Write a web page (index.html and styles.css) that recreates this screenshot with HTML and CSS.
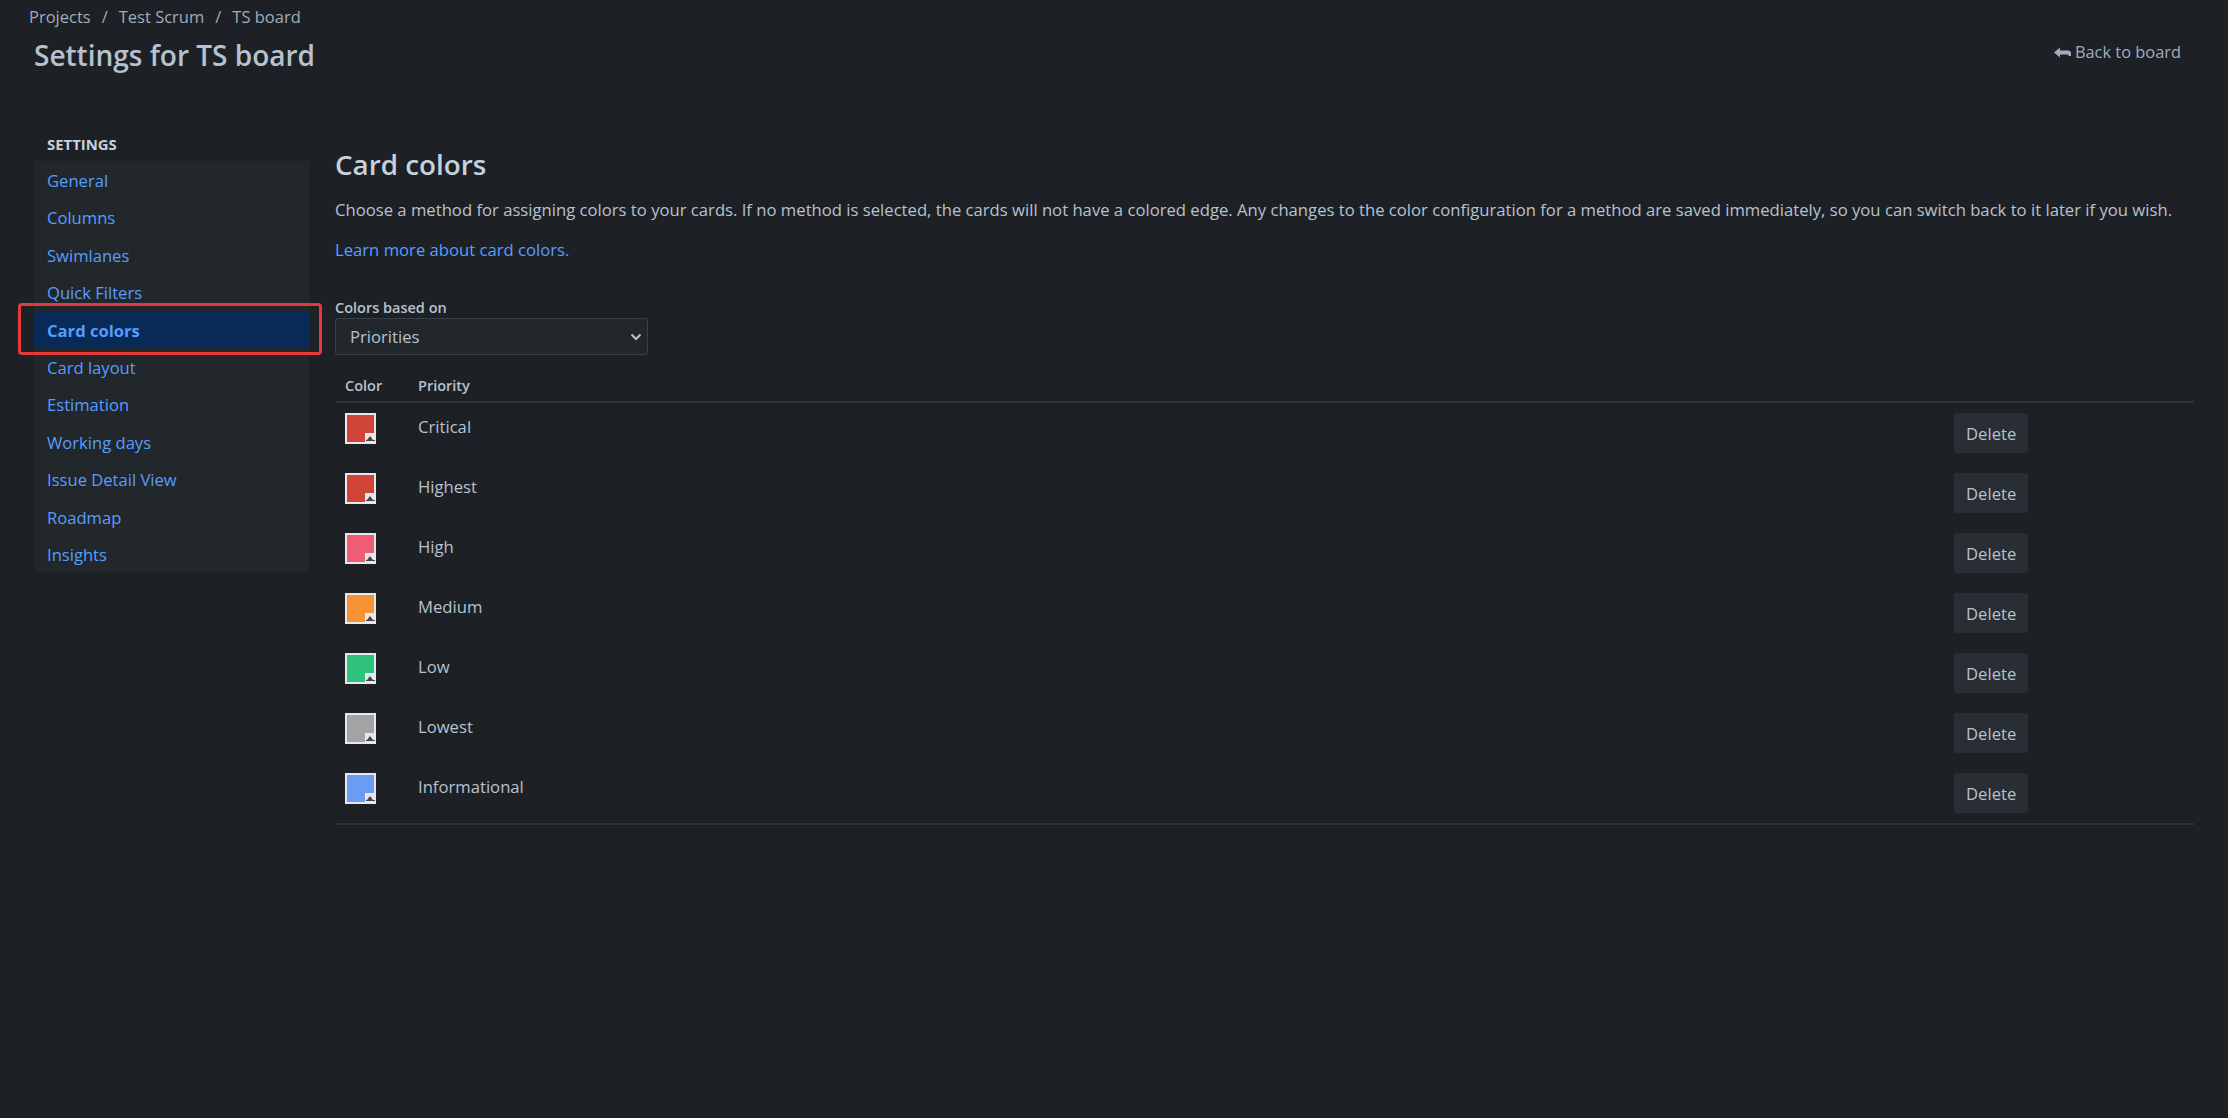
FILE: index.html
```html
<!DOCTYPE html>
<html lang="en">
<head>
<meta charset="utf-8">
<title>Settings for TS board</title>
<link rel="stylesheet" href="styles.css">
</head>
<body>
<div class="page">
  <div class="page-header">
    <div class="crumbs">
      <a href="#">Projects</a><span class="sep">/</span><a href="#">Test Scrum</a><span class="sep">/</span><a href="#">TS board</a>
    </div>
    <div class="title-row">
      <h1>Settings for TS board</h1>
      <a class="back" href="#">
        <svg width="17" height="12" viewBox="0 0 17 12"><path d="M0 5.5 L6 0.5 L6 3.5 L14 3.5 Q17 3.5 17 6.5 L17 9 L14.5 9 L14.5 7.5 L6 7.5 L6 10.5 Z" fill="#9fadbc"/></svg>Back to board
      </a>
    </div>
  </div>

  <div class="layout">
    <div class="side">
      <div class="side-title">Settings</div>
      <ul class="side-nav">
        <li><a href="#">General</a></li>
        <li><a href="#">Columns</a></li>
        <li><a href="#">Swimlanes</a></li>
        <li><a href="#">Quick Filters</a></li>
        <li class="current"><a href="#">Card colors</a></li>
        <li><a href="#">Card layout</a></li>
        <li><a href="#">Estimation</a></li>
        <li><a href="#">Working days</a></li>
        <li><a href="#">Issue Detail View</a></li>
        <li><a href="#">Roadmap</a></li>
        <li><a href="#">Insights</a></li>
      </ul>
    </div>

    <div class="content">
      <h2>Card colors</h2>
      <p class="desc">Choose a method for assigning colors to your cards. If no method is selected, the cards will not have a colored edge. Any changes to the color configuration for a method are saved immediately, so you can switch back to it later if you wish.</p>
      <p class="learn"><a href="#">Learn more about card colors.</a></p>

      <div class="field-label">Colors based on</div>
      <div class="select">
        <span>Priorities</span>
        <svg width="12" height="8" viewBox="0 0 12 8"><path d="M1.5 1.5 L6 6 L10.5 1.5" fill="none" stroke="#b6c2cf" stroke-width="2"/></svg>
      </div>

      <div class="colors">
        <div class="row head">
          <div class="cell">Color</div>
          <div class="cell">Priority</div>
          <div class="cell"></div>
        </div>
        <div class="row">
          <div class="cell"><span class="swatch red"><span class="picker"></span></span></div>
          <div class="cell name">Critical</div>
          <div class="cell"><button class="btn">Delete</button></div>
        </div>
        <div class="row">
          <div class="cell"><span class="swatch red"><span class="picker"></span></span></div>
          <div class="cell name">Highest</div>
          <div class="cell"><button class="btn">Delete</button></div>
        </div>
        <div class="row">
          <div class="cell"><span class="swatch pink"><span class="picker"></span></span></div>
          <div class="cell name">High</div>
          <div class="cell"><button class="btn">Delete</button></div>
        </div>
        <div class="row">
          <div class="cell"><span class="swatch orange"><span class="picker"></span></span></div>
          <div class="cell name">Medium</div>
          <div class="cell"><button class="btn">Delete</button></div>
        </div>
        <div class="row">
          <div class="cell"><span class="swatch green"><span class="picker"></span></span></div>
          <div class="cell name">Low</div>
          <div class="cell"><button class="btn">Delete</button></div>
        </div>
        <div class="row">
          <div class="cell"><span class="swatch grey"><span class="picker"></span></span></div>
          <div class="cell name">Lowest</div>
          <div class="cell"><button class="btn">Delete</button></div>
        </div>
        <div class="row">
          <div class="cell"><span class="swatch blue"><span class="picker"></span></span></div>
          <div class="cell name">Informational</div>
          <div class="cell"><button class="btn">Delete</button></div>
        </div>
      </div>
    </div>
  </div>
</div>
</body>
</html>
```

FILE: styles.css
```css
body,div,ul,li,h1,h2,p{margin:0;padding:0;}
ul{list-style-type:none;}
a{text-decoration:none;}
body{background:#1d2125;color:#b6c2cf;font:16.66px/24px "Open Sans","Liberation Sans",sans-serif;}

.page{padding:0 34px 0 29px;}

/* header */
.page-header{padding-top:5px;}
.crumbs{font-size:16.5px;line-height:24px;color:#9fadbc;}
.crumbs a{color:#9fadbc;}
.crumbs .sep{margin:0 11px;}
.title-row{display:flex;align-items:flex-start;justify-content:space-between;margin-top:3px;height:40px;}
.title-row h1{font-size:28px;line-height:40px;padding-top:3px;font-weight:600;color:#b6c2cf;margin-left:5px;}
.back{display:flex;align-items:center;gap:4px;margin-right:13px;padding-top:8px;line-height:24px;color:#9fadbc;font-size:16.4px;}
.back svg{display:block;margin-top:1px;}

/* layout */
.layout{display:flex;gap:26px;margin-top:62px;padding-left:5px;}

.side{width:275px;flex:none;}
.side-title{font-size:14.9px;line-height:20px;font-weight:700;text-transform:uppercase;color:#c7d1db;padding-left:13px;margin-bottom:7px;}
.side-nav{background:#22272b;}
.side-nav li{height:37.4px;line-height:39.5px;padding-left:13px;font-size:16.6px;}
.side-nav a{color:#579dff;}
.side-nav li.current{background:#092957;position:relative;}
.side-nav li.current a{font-weight:700;color:#579dff;}
.side-nav li.current:after{content:"";position:absolute;left:-16px;right:-13px;top:-8px;bottom:-7px;border:3px solid #e5393b;border-radius:4px;}

.content{flex:1;padding-top:12px;}
.content h2{font-size:27.8px;line-height:36px;font-weight:600;color:#c7d1db;}
.desc{margin-top:16px;}
.learn{margin-top:16px;}
.learn a{color:#579dff;}

.field-label{margin-top:37px;font-size:14.5px;line-height:18px;font-weight:600;color:#b6c2cf;}
.select{width:313px;height:37px;margin-top:1px;box-sizing:border-box;border:1px solid #38414a;border-radius:3px;background:#22272b;display:flex;align-items:center;justify-content:space-between;padding:0 5px 0 14px;}

/* color table */
.colors{margin-top:12px;border-bottom:2px solid #2c333a;margin-left:1px;}
.row{display:grid;grid-template-columns:73px 1fr 249px;height:60px;}
.row .cell{padding:10px 9px 0;}
.row.head{height:auto;border-bottom:2px solid #2c333a;}
.row.head .cell{padding:9px 9px 5px;font-size:14.5px;line-height:20px;font-weight:600;color:#b6c2cf;}
.row .name{padding-top:12px;}

.swatch{display:block;width:31px;height:31px;box-sizing:border-box;border:2px solid #e6e8ec;position:relative;}
.swatch .picker{position:absolute;right:-2px;bottom:-2px;width:11px;height:11px;background:#e6e8ec;}
.swatch .picker:before{content:"";position:absolute;left:2px;top:3px;border-left:3.5px solid transparent;border-right:3.5px solid transparent;border-bottom:4px solid #444;}
.swatch .picker:after{content:"";position:absolute;left:1px;top:7px;width:9px;height:1px;background:#444;}
.red{background:#d04437;}
.pink{background:#f15c75;}
.orange{background:#f79232;}
.green{background:#2ec27e;}
.grey{background:#a3a3a3;}
.blue{background:#6b9bf2;}

.btn{height:40px;padding:0 12px;border:0;border-radius:3px;background:#282e33;color:#b6c2cf;font:16.66px "Open Sans","Liberation Sans",sans-serif;cursor:pointer;}
```
